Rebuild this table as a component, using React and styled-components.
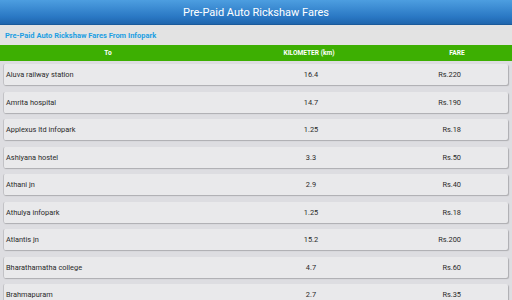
import styled, { createGlobalStyle } from "styled-components";

const GlobalStyle = createGlobalStyle`
    body {
        margin: 0;
        background: #dddde1;
        font-family: Roboto, "Liberation Sans", sans-serif;
    }
`

const fares = [
    { to: "Aluva railway station", km: "16.4", fare: "Rs.220" },
    { to: "Amrita hospital", km: "14.7", fare: "Rs.190" },
    { to: "Applexus ltd infopark", km: "1.25", fare: "Rs.18" },
    { to: "Ashiyana hostel", km: "3.3", fare: "Rs.50" },
    { to: "Athani jn", km: "2.9", fare: "Rs.40" },
    { to: "Athulya infopark", km: "1.25", fare: "Rs.18" },
    { to: "Atlantis jn", km: "15.2", fare: "Rs.200" },
    { to: "Bharathamatha college", km: "4.7", fare: "Rs.60" },
    { to: "Brahmapuram", km: "2.7", fare: "Rs.35" },
]

export default function App () {
    return (
        <>
        <GlobalStyle />
        <PageStyle>
            <TitleBarStyle>Pre-Paid Auto Rickshaw Fares</TitleBarStyle>
            <SubTitleStyle>Pre-Paid Auto Rickshaw Fares From Infopark</SubTitleStyle>
            <HeadRowStyle>
                <span>To</span>
                <span>KILOMETER (km)</span>
                <span>FARE</span>
            </HeadRowStyle>
            <ListStyle>
                {fares.map(item => {
                    return (
                        <CardStyle key={item.to}>
                            <PlaceStyle>{item.to}</PlaceStyle>
                            <KmStyle>{item.km}</KmStyle>
                            <FareStyle>{item.fare}</FareStyle>
                        </CardStyle>
                    )
                })}
            </ListStyle>
        </PageStyle>
        </>
    )
}

const PageStyle = styled.div`
    width: 512px;
    height: 300px;
    overflow: hidden;
`

const TitleBarStyle = styled.div`
    height: 24px;
    display: flex;
    align-items: center;
    justify-content: center;
    background: linear-gradient(#4d9ee0, #2a78c4 70%, #1f66ad);
    border-bottom: 1px solid #1a5a9a;
    color: white;
    font-size: 11px;
`

const SubTitleStyle = styled.div`
    height: 20px;
    display: flex;
    align-items: center;
    padding-left: 5px;
    background: #e3e3e3;
    color: #1d9fe2;
    font-size: 7.5px;
    font-weight: 700;
`

const HeadRowStyle = styled.div`
    height: 16px;
    display: grid;
    grid-template-columns: 216px 186px 1fr;
    align-items: center;
    background: #3daf02;
    color: white;
    font-size: 6.6px;
    font-weight: 700;
    text-align: center;
`

const ListStyle = styled.div`
    display: flex;
    flex-direction: column;
    gap: 6.5px;
    padding: 3px 4px 0 3px;
`

const CardStyle = styled.div`
    height: 21px;
    display: grid;
    grid-template-columns: 210px 194px 1fr;
    align-items: center;
    background: #e9e9eb;
    border-radius: 2px;
    border-left: 1px solid #c2c2c6;
    box-shadow: 1px 1px 1px rgba(0, 0, 0, 0.22);
    color: #2a2a2a;
    font-size: 7.4px;
`

const PlaceStyle = styled.span`
    padding-left: 2px;
`

const KmStyle = styled.span`
    text-align: center;
`

const FareStyle = styled.span`
    text-align: right;
    padding-right: 47px;
`
